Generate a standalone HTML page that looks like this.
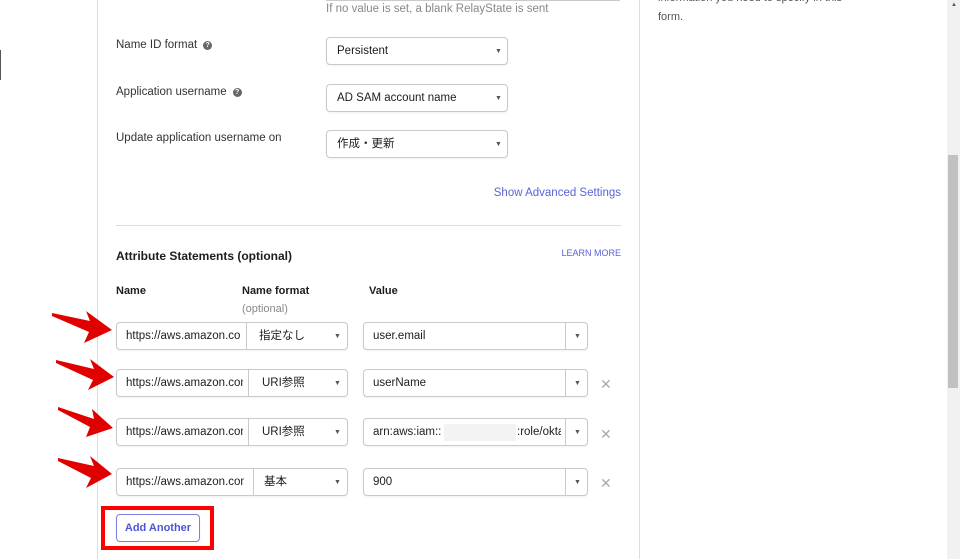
<!DOCTYPE html>
<html><head><meta charset="utf-8"><style>
*{box-sizing:border-box;margin:0;padding:0}
body{width:960px;height:559px;overflow:hidden;background:#fff;font-family:"Liberation Sans","Noto Sans CJK JP",sans-serif;color:#1d1d21;position:relative;font-size:11.5px}
.a{position:absolute;white-space:nowrap}
.box{position:absolute;border:1px solid #c9c9ce;border-radius:4px;background:#fff;box-shadow:0 1px 2px rgba(0,0,0,.06)}
.box span{line-height:14px;font-size:11.5px}
.sel{height:28px;width:182px;left:326px}
.sel span{position:absolute;left:10px;top:6px}
.car{position:absolute;font-size:7px;color:#555}
.lab{font-size:11.5px;color:#333}
.q{display:inline-block;width:9px;height:9px;border-radius:50%;background:#666;color:#fff;font-size:7px;text-align:center;line-height:9px;font-weight:bold;vertical-align:1px;margin-left:6px}
.x{position:absolute;left:600px;font-size:14px;color:#aaa}
</style></head><body>
<div class="a" style="left:97px;top:0;width:1px;height:559px;background:#ddd"></div>
<div class="a" style="left:639px;top:0;width:1px;height:559px;background:#ddd"></div>
<div class="a" style="left:0;top:50px;width:1px;height:30px;background:#555"></div>
<div class="a" style="left:326px;top:0;width:294px;height:1px;background:#c9c9ce"></div>
<div class="a" style="left:326px;top:3px;font-size:11.5px;color:#888">If no value is set, a blank RelayState is sent</div>
<div class="a" style="left:658px;top:-8px;font-size:11px;color:#555">information you need to specify in this</div>
<div class="a" style="left:658px;top:11px;font-size:11px;color:#555">form.</div>
<div class="a" style="left:947px;top:0;width:13px;height:559px;background:#f1f1f1"></div>
<div class="a" style="left:948px;top:155px;width:10px;height:233px;background:#c1c1c1"></div>
<div class="a" style="left:951px;top:2px;font-size:6px;color:#555">▲</div>

<div class="a lab" style="left:116px;top:39px">Name ID format<span class="q">?</span></div>
<div class="a lab" style="left:116px;top:86px">Application username<span class="q">?</span></div>
<div class="a lab" style="left:116px;top:132px">Update application username on</div>
<div class="box sel" style="top:37px"><span>Persistent</span><i class="car" style="left:168px;top:10px">▼</i></div>
<div class="box sel" style="top:84px"><span>AD SAM account name</span><i class="car" style="left:168px;top:10px">▼</i></div>
<div class="box sel" style="top:130px"><span>作成・更新</span><i class="car" style="left:168px;top:10px">▼</i></div>
<div class="a" style="right:339px;top:187px;font-size:11.5px;color:#5a63d8">Show Advanced Settings</div>
<div class="a" style="left:116px;top:225px;width:505px;height:1px;background:#ddd"></div>
<div class="a" style="left:116px;top:249px;font-size:12px;color:#1d1d21;font-weight:bold">Attribute Statements (optional)</div>
<div class="a" style="right:339px;top:248px;font-size:9px;color:#5a63d8">LEARN MORE</div>
<div class="a" style="left:116px;top:285px;font-size:11px;font-weight:bold">Name</div>
<div class="a" style="left:242px;top:285px;font-size:11px;font-weight:bold">Name format</div>
<div class="a" style="left:242px;top:303px;font-size:11px;color:#888">(optional)</div>
<div class="a" style="left:369px;top:285px;font-size:11px;font-weight:bold">Value</div>

<div class="box" style="left:116px;top:322px;width:232px;height:28px"><span class="a" style="left:9px;top:6px;width:115px;overflow:hidden">https://aws.amazon.com</span><div class="a" style="left:129px;top:0;width:1px;height:26px;background:#c9c9ce"></div><span class="a" style="left:142px;top:6px">指定なし</span><i class="car" style="left:217px;top:10px">▼</i></div>
<div class="box" style="left:363px;top:322px;width:225px;height:28px"><span class="a" style="left:9px;top:6px">user.email</span><div class="a" style="left:201px;top:0;width:1px;height:26px;background:#c9c9ce"></div><i class="car" style="left:210px;top:10px">▼</i></div>

<div class="box" style="left:116px;top:369px;width:232px;height:28px"><span class="a" style="left:9px;top:6px;width:117px;overflow:hidden">https://aws.amazon.com</span><div class="a" style="left:131px;top:0;width:1px;height:26px;background:#c9c9ce"></div><span class="a" style="left:145px;top:6px">URI参照</span><i class="car" style="left:217px;top:10px">▼</i></div>
<div class="box" style="left:363px;top:369px;width:225px;height:28px"><span class="a" style="left:9px;top:6px">userName</span><div class="a" style="left:201px;top:0;width:1px;height:26px;background:#c9c9ce"></div><i class="car" style="left:210px;top:10px">▼</i></div>
<div class="x" style="top:376px">✕</div>

<div class="box" style="left:116px;top:418px;width:232px;height:28px"><span class="a" style="left:9px;top:6px;width:117px;overflow:hidden">https://aws.amazon.com</span><div class="a" style="left:131px;top:0;width:1px;height:26px;background:#c9c9ce"></div><span class="a" style="left:145px;top:6px">URI参照</span><i class="car" style="left:217px;top:10px">▼</i></div>
<div class="box" style="left:363px;top:418px;width:225px;height:28px"><span class="a" style="left:9px;top:6px">arn:aws:iam::</span><div class="a" style="left:80px;top:5px;width:72px;height:17px;background:#f3f3f3"></div><span class="a" style="left:153px;top:6px;width:44px;overflow:hidden">:role/okta</span><div class="a" style="left:201px;top:0;width:1px;height:26px;background:#c9c9ce"></div><i class="car" style="left:210px;top:10px">▼</i></div>
<div class="x" style="top:426px">✕</div>

<div class="box" style="left:116px;top:468px;width:232px;height:28px"><span class="a" style="left:9px;top:6px;width:118px;overflow:hidden">https://aws.amazon.com</span><div class="a" style="left:136px;top:0;width:1px;height:26px;background:#c9c9ce"></div><span class="a" style="left:147px;top:6px">基本</span><i class="car" style="left:217px;top:10px">▼</i></div>
<div class="box" style="left:363px;top:468px;width:225px;height:28px"><span class="a" style="left:9px;top:6px">900</span><div class="a" style="left:201px;top:0;width:1px;height:26px;background:#c9c9ce"></div><i class="car" style="left:210px;top:10px">▼</i></div>
<div class="x" style="top:475px">✕</div>

<div class="a" style="left:101px;top:506px;width:113px;height:44px;border:4px solid #f00"></div>
<div class="box" style="left:116px;top:514px;width:84px;height:28px;border-color:#7a82e0;color:#4c55d6;font-weight:bold;font-size:11px;text-align:center;line-height:26px">Add Another</div>

<svg class="a" style="left:0;top:0" width="120" height="559">
<g fill="#e00000">
<polygon points="52,313 90,321 86,311 112,330 84,343 89,332 52,316"/>
<polygon points="56,360 94,369 90,359 114,377 88,390 93,380 56,363"/>
<polygon points="58,407 94,419 92,409 113,428 86,437 90,427 58,410"/>
<polygon points="58,458 94,466 90,456 112,474 86,488 91,478 58,461"/>
</g></svg>
</body></html>
